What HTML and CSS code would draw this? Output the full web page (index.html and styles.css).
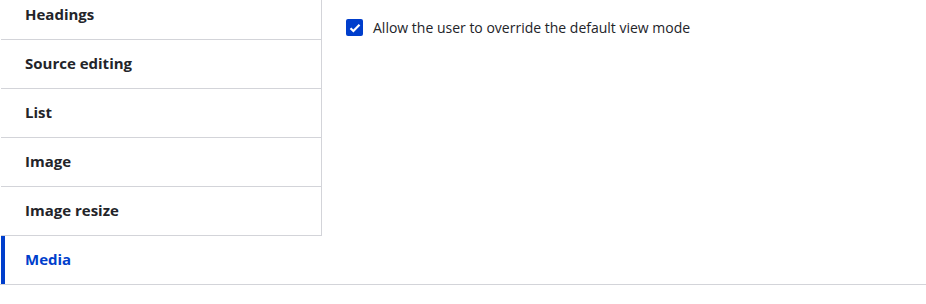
FILE: index.html
```html
<!DOCTYPE html>
<html lang="en">
<head>
    <meta charset="UTF-8">
    <title>Vertical tabs</title>
    <link rel="stylesheet" href="styles.css">
</head>
<body>
    <div class="vertical-tabs">
        <ul class="tabs-menu">
            <li class="tab-item first"><a href="#">Headings</a></li>
            <li class="tab-item"><a href="#">Source editing</a></li>
            <li class="tab-item"><a href="#">List</a></li>
            <li class="tab-item"><a href="#">Image</a></li>
            <li class="tab-item"><a href="#">Image resize</a></li>
            <li class="tab-item active"><a href="#">Media</a></li>
        </ul>
        <div class="tabs-pane">
            <label class="form-check">
                <input type="checkbox" checked>
                <span class="check-box">
                    <svg width="12" height="10" viewBox="0 0 12 10"><path d="M1.5 5.2 4.4 8 10.5 1.8" fill="none" stroke="#fff" stroke-width="2.2"/></svg>
                </span>
                <span class="check-label">Allow the user to override the default view mode</span>
            </label>
        </div>
    </div>
</body>
</html>
```

FILE: styles.css
```css
:root {
    --text-color: #232429;
    --border-color: #d3d4d9;
    --active-color: #003ecc;
}

body {
    margin: 0;
    font-family: "Open Sans", "Noto Sans", sans-serif;
    color: var(--text-color);
    background: #fff;
}

.vertical-tabs {
    display: flex;
    margin-top: -9px;
    padding-left: 1px;
    border-bottom: 1px solid var(--border-color);
    box-shadow: 0 2px 4px rgba(0, 0, 0, 0.1);
}

.tabs-menu {
    list-style: none;
    margin: 0;
    padding: 0;
    width: 320px;
    border-right: 1px solid var(--border-color);
}

.tab-item {
    height: 48px;
    border-bottom: 1px solid var(--border-color);
    display: flex;
    align-items: center;
}

.tab-item a {
    padding-left: 24px;
    padding-bottom: 2px;
    font-size: 15px;
    font-weight: bold;
    color: var(--text-color);
    text-decoration: none;
}

.tab-item.active {
    height: 48px;
    margin-right: -606px;
    border-bottom: none;
    border-left: 4px solid var(--active-color);
    background: #fff;
    position: relative;
}

.tab-item.active a {
    padding-left: 20px;
    color: var(--active-color);
}

.tabs-pane {
    flex: 1;
    padding: 27px 24px 0;
}

.form-check {
    display: flex;
    align-items: center;
    gap: 10px;
    font-size: 14px;
}

.form-check input {
    display: none;
}

.check-box {
    width: 17px;
    height: 17px;
    border-radius: 2px;
    background: var(--active-color);
    display: flex;
    align-items: center;
    justify-content: center;
}
```
